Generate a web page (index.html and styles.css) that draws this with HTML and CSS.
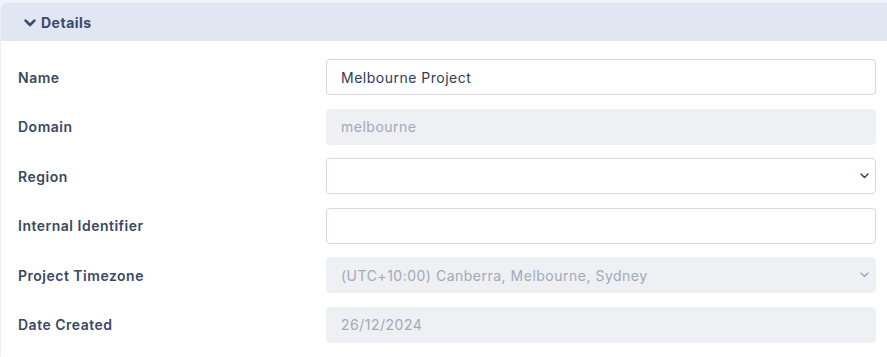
FILE: index.html
```html
<!DOCTYPE html>
<html lang="en">
<head>
    <meta charset="UTF-8">
    <meta name="viewport" content="width=device-width, initial-scale=1.0">
    <title>Project Details</title>
    <link rel="stylesheet" href="styles.css">
</head>
<body>
    <section class="panel">
        <header class="panel-header">
            <svg class="toggle" width="12" height="8" viewBox="0 0 12 8">
                <path d="M1.6 1.6 L6 6 L10.4 1.6" fill="none" stroke="currentColor" stroke-width="2.6" stroke-linecap="round" stroke-linejoin="round"/>
            </svg>
            <span>Details</span>
        </header>
        <form class="fields">
            <label for="name">Name</label>
            <input type="text" id="name" value="Melbourne Project">

            <label for="domain">Domain</label>
            <input type="text" id="domain" value="melbourne" disabled>

            <label for="region">Region</label>
            <div class="select-wrap">
                <select id="region">
                    <option value=""></option>
                </select>
                <svg class="caret" width="9" height="6" viewBox="0 0 9 6">
                    <path d="M1 1 L4.5 4.5 L8 1" fill="none" stroke="currentColor" stroke-width="1.5" stroke-linecap="round" stroke-linejoin="round"/>
                </svg>
            </div>

            <label for="identifier">Internal Identifier</label>
            <input type="text" id="identifier">

            <label for="timezone">Project Timezone</label>
            <div class="select-wrap disabled">
                <select id="timezone" disabled>
                    <option>(UTC+10:00) Canberra, Melbourne, Sydney</option>
                </select>
                <svg class="caret" width="9" height="6" viewBox="0 0 9 6">
                    <path d="M1 1 L4.5 4.5 L8 1" fill="none" stroke="currentColor" stroke-width="1.5" stroke-linecap="round" stroke-linejoin="round"/>
                </svg>
            </div>

            <label for="created">Date Created</label>
            <input type="text" id="created" value="26/12/2024" disabled>
        </form>
    </section>
</body>
</html>
```
FILE: styles.css
```css
html {
    overflow: hidden;
}
body {
    font-family: Inter, "Open Sans", sans-serif;
    letter-spacing: 0.5px;
    margin: 0;
    padding: 3px 0 0 1px;
    background-color: #f2f4fb;
    color: #3a4863;
}
.panel {
    margin-right: -8px;
    background: #fff;
    border-radius: 6px 6px 0 0;
    box-shadow: 0 2px 8px rgba(60,70,110,0.06);
}
.panel-header {
    display: flex;
    align-items: center;
    gap: 5px;
    height: 38px;
    padding-left: 23px;
    background: #e0e6f2;
    border-radius: 6px 6px 0 0;
    font-size: 14px;
    font-weight: 700;
    color: #3a4a6b;
}
.toggle {
    margin-top: 1px;
}
.fields {
    display: grid;
    grid-template-columns: 308px 1fr;
    row-gap: 13.6px;
    align-items: center;
    padding: 18px 19px 14px 17px;
}
.fields label {
    font-size: 14px;
    font-weight: 600;
    color: #3a4863;
}
input, select {
    box-sizing: border-box;
    width: 100%;
    height: 36px;
    padding: 0 14px;
    border: 1px solid #d4d7de;
    border-radius: 4px;
    background: #fff;
    font-family: inherit;
    font-size: 14px;
    letter-spacing: 0.5px;
    color: #2f3c55;
    outline: none;
}
input:disabled, select:disabled {
    background: #eef0f4;
    border-color: #eef0f4;
    color: #a2a9b9;
    opacity: 1;
}
select {
    appearance: none;
    -webkit-appearance: none;
}
.select-wrap {
    position: relative;
}
.caret {
    position: absolute;
    right: 7px;
    top: 15px;
    color: #3a4863;
    pointer-events: none;
}
.select-wrap.disabled .caret {
    color: #a2a9b9;
}
```
